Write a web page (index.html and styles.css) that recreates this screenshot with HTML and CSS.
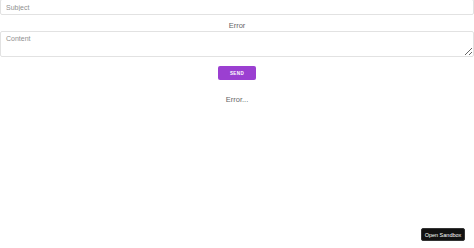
FILE: index.html
```html
<!DOCTYPE html>
<html>
<head>
<meta charset="utf-8">
<link rel="stylesheet" href="styles.css">
</head>
<body>
<form class="form">
  <input class="field subject" type="text" placeholder="Subject">
  <div class="error">Error</div>
  <textarea class="field content" placeholder="Content"></textarea>
  <div class="actions"><button class="send" type="button">Send</button></div>
  <div class="status">Error...</div>
</form>
<button class="sandbox" type="button">Open Sandbox</button>
</body>
</html>
```
FILE: styles.css
```css
html, body {
  margin: 0;
  padding: 0;
  background: #ffffff;
  font-family: "Liberation Sans", Arial, sans-serif;
}
.form {
  display: flex;
  flex-direction: column;
  margin-top: -1px;
}
.field {
  box-sizing: border-box;
  width: 100%;
  margin: 0;
  border: 1px solid #e2e2e2;
  border-radius: 2px;
  background: #fff;
  font-family: "Liberation Sans", Arial, sans-serif;
  font-size: 7px;
  color: #888;
  padding: 0 5px;
  outline: none;
}
.field::placeholder {
  color: #8f8f8f;
}
.subject {
  height: 16px;
}
.error {
  text-align: center;
  font-size: 7.5px;
  color: #666;
  padding: 6px 0 0;
  height: 10px;
  line-height: 10px;
}
.content {
  height: 26px;
  margin-top: 0;
  padding-top: 2px;
  resize: vertical;
  line-height: 9px;
}
.actions {
  display: flex;
  justify-content: center;
  padding-top: 9px;
}
.send {
  width: 38px;
  height: 14px;
  border: none;
  border-radius: 2px;
  background: #9b3fd1;
  color: #fff;
  font-family: "Liberation Sans", Arial, sans-serif;
  font-size: 4.5px;
  font-weight: bold;
  letter-spacing: 0.4px;
  text-transform: uppercase;
  padding: 0;
}
.status {
  text-align: center;
  font-size: 7.5px;
  color: #666;
  padding-top: 15px;
  line-height: 10px;
}
.sandbox {
  position: fixed;
  right: 9px;
  bottom: 7px;
  width: 44px;
  height: 13px;
  padding: 0;
  border: 1px solid #333;
  border-radius: 2px;
  background: #111;
  color: #fff;
  font-family: "Liberation Sans", Arial, sans-serif;
  font-size: 5.5px;
}
```
